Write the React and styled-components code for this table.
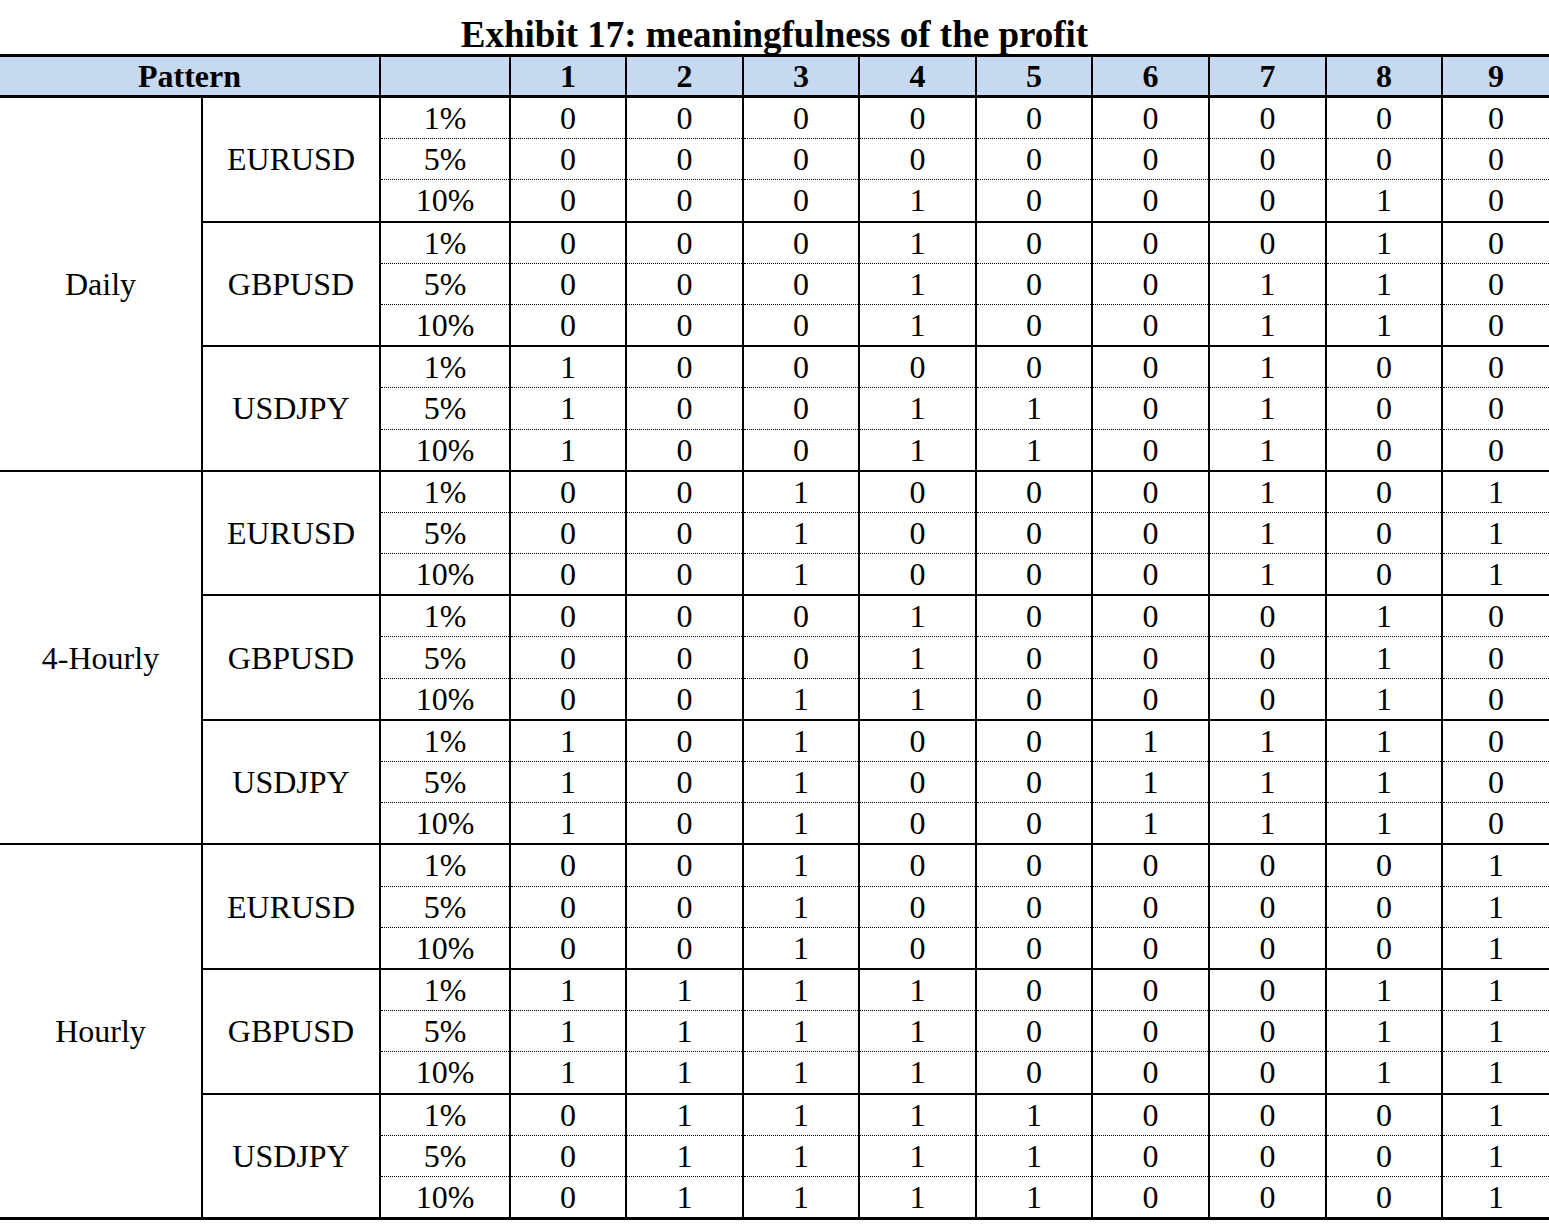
import React from "react";
import styled, { createGlobalStyle } from "styled-components";

const GlobalStyle = createGlobalStyle`
  html, body {
    margin: 0;
    padding: 0;
    background: #fff;
  }
  body {
    font-family: "Liberation Serif", "Times New Roman", serif;
    color: #000;
  }
`;

const Page = styled.div`
  width: 1549px;
  overflow: hidden;
`;

const Title = styled.h1`
  margin: 0;
  height: 54px;
  line-height: 70px;
  font-size: 37px;
  font-weight: bold;
  text-align: center;
`;

const Table = styled.table`
  width: 1549px;
  table-layout: fixed;
  border-collapse: collapse;
  border-bottom: 3px solid #000;
`;

const HeadCell = styled.th`
  height: 38px;
  padding: 0;
  background: #c6d9f0;
  border-top: 3px solid #000;
  border-bottom: 3px solid #000;
  border-left: ${(p) => (p.$first ? "none" : "2px solid #000")};
  font-size: 32px;
  font-weight: bold;
  text-align: center;
  line-height: 38px;
`;

const Cell = styled.td`
  height: 40.2px;
  padding: 0;
  border-left: ${(p) => (p.$first ? "none" : "2px solid #000")};
  border-top: ${(p) =>
    p.$top === "solid"
      ? "2px solid #000"
      : p.$top === "dotted"
      ? "1px dotted #000"
      : "none"};
  font-size: 32px;
  text-align: center;
  vertical-align: middle;
  line-height: 38px;
`;

const cols = [202, 178, 130, 116, 117, 116, 117, 116, 117, 117, 116, 107];

const data = [
  {
    frame: "Daily",
    pairs: [
      ["EURUSD", [[0,0,0,0,0,0,0,0,0],[0,0,0,0,0,0,0,0,0],[0,0,0,1,0,0,0,1,0]]],
      ["GBPUSD", [[0,0,0,1,0,0,0,1,0],[0,0,0,1,0,0,1,1,0],[0,0,0,1,0,0,1,1,0]]],
      ["USDJPY", [[1,0,0,0,0,0,1,0,0],[1,0,0,1,1,0,1,0,0],[1,0,0,1,1,0,1,0,0]]],
    ],
  },
  {
    frame: "4-Hourly",
    pairs: [
      ["EURUSD", [[0,0,1,0,0,0,1,0,1],[0,0,1,0,0,0,1,0,1],[0,0,1,0,0,0,1,0,1]]],
      ["GBPUSD", [[0,0,0,1,0,0,0,1,0],[0,0,0,1,0,0,0,1,0],[0,0,1,1,0,0,0,1,0]]],
      ["USDJPY", [[1,0,1,0,0,1,1,1,0],[1,0,1,0,0,1,1,1,0],[1,0,1,0,0,1,1,1,0]]],
    ],
  },
  {
    frame: "Hourly",
    pairs: [
      ["EURUSD", [[0,0,1,0,0,0,0,0,1],[0,0,1,0,0,0,0,0,1],[0,0,1,0,0,0,0,0,1]]],
      ["GBPUSD", [[1,1,1,1,0,0,0,1,1],[1,1,1,1,0,0,0,1,1],[1,1,1,1,0,0,0,1,1]]],
      ["USDJPY", [[0,1,1,1,1,0,0,0,1],[0,1,1,1,1,0,0,0,1],[0,1,1,1,1,0,0,0,1]]],
    ],
  },
];

const levels = ["1%", "5%", "10%"];

export default function App() {
  return (
    <Page>
      <GlobalStyle />
      <Title>Exhibit 17: meaningfulness of the profit</Title>
      <Table>
        <colgroup>
          {cols.map((w, i) => (
            <col key={i} style={{ width: w }} />
          ))}
        </colgroup>
        <thead>
          <tr>
            <HeadCell colSpan={2} $first>
              Pattern
            </HeadCell>
            <HeadCell />
            {[1, 2, 3, 4, 5, 6, 7, 8, 9].map((n) => (
              <HeadCell key={n}>{n}</HeadCell>
            ))}
          </tr>
        </thead>
        <tbody>
          {data.map((g, gi) =>
            g.pairs.map(([pair, rows], pi) =>
              rows.map((vals, ri) => {
                const top =
                  ri > 0 ? "dotted" : pi === 0 && gi === 0 ? "none" : "solid";
                return (
                  <tr key={`${gi}-${pi}-${ri}`}>
                    {pi === 0 && ri === 0 && (
                      <Cell rowSpan={9} $top={top} $first>
                        {g.frame}
                      </Cell>
                    )}
                    {ri === 0 && (
                      <Cell rowSpan={3} $top={top}>
                        {pair}
                      </Cell>
                    )}
                    <Cell $top={top}>{levels[ri]}</Cell>
                    {vals.map((v, vi) => (
                      <Cell key={vi} $top={top}>
                        {v}
                      </Cell>
                    ))}
                  </tr>
                );
              })
            )
          )}
        </tbody>
      </Table>
    </Page>
  );
}
